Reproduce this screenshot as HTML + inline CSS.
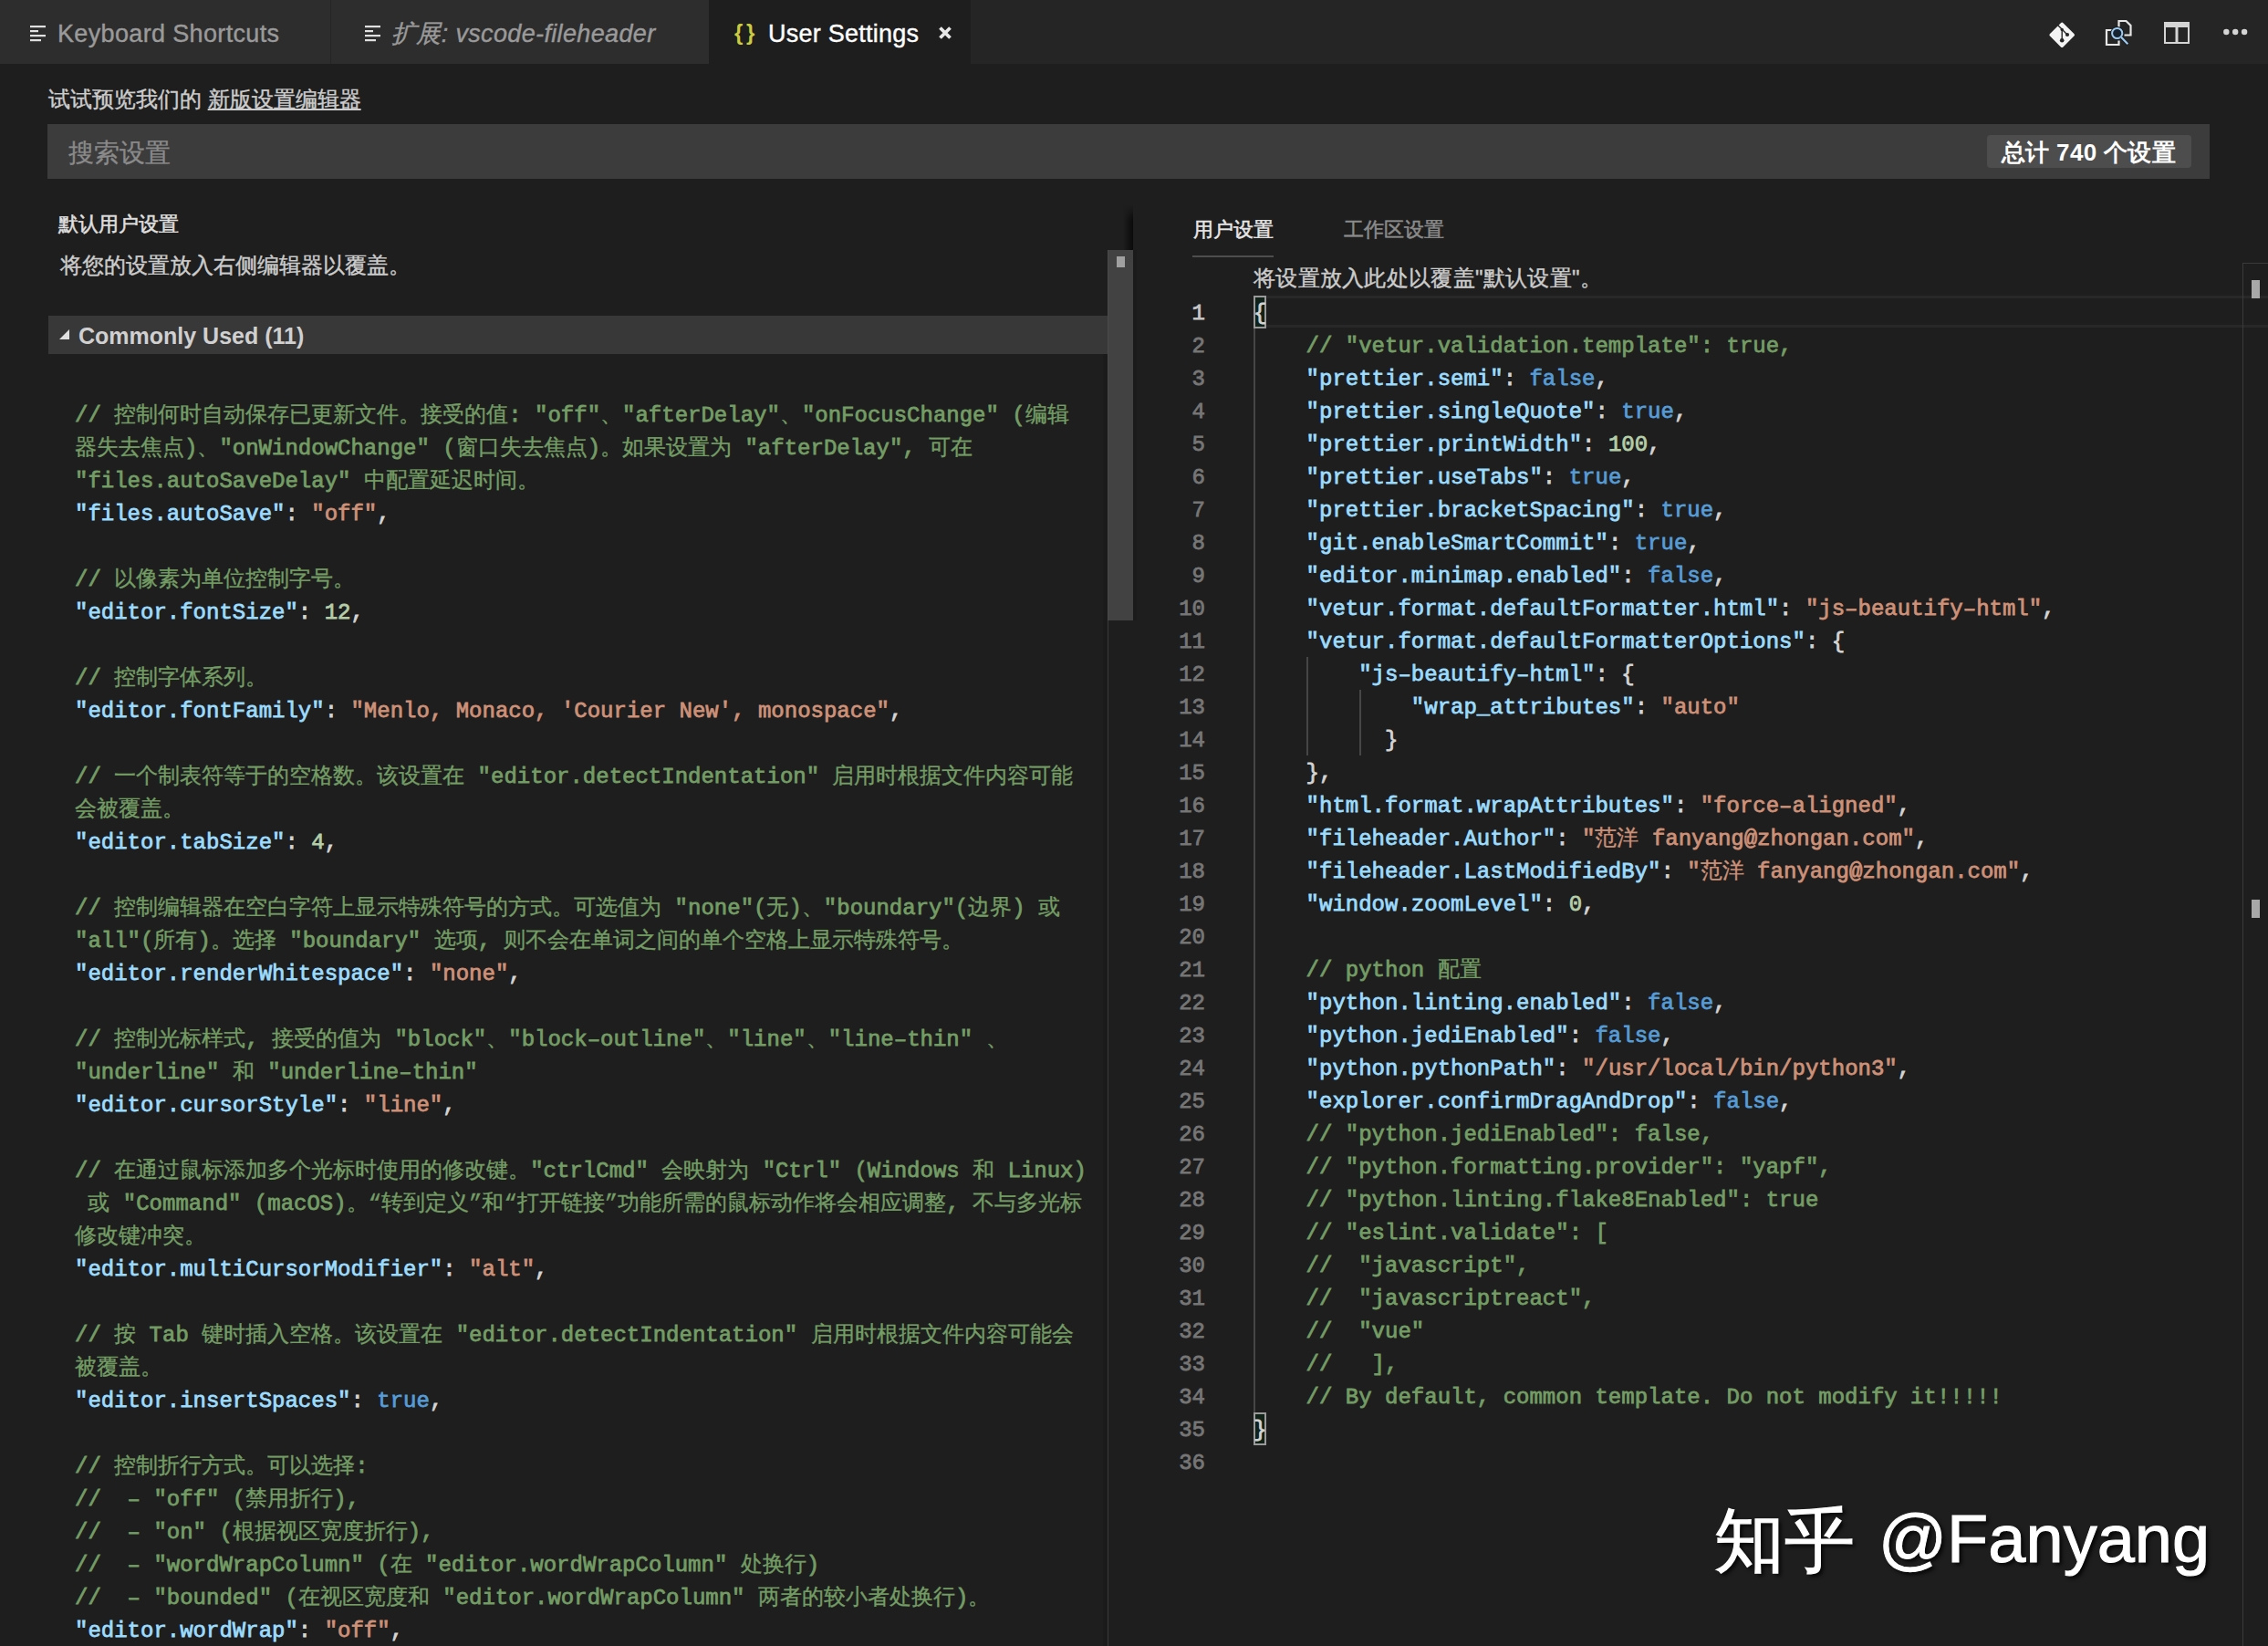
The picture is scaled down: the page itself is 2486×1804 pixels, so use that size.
<!DOCTYPE html><html><head><meta charset="utf-8"><style>
*{margin:0;padding:0;box-sizing:border-box}
html,body{width:2486px;height:1804px;overflow:hidden;background:#1e1e1e}
body{position:relative;font-family:"Liberation Sans",sans-serif;color:#ccc}
.a{position:absolute;white-space:pre}
.m{font-family:"Liberation Mono",monospace;font-size:24px;line-height:36px;height:36px;padding-top:3px;-webkit-text-stroke:0.8px currentColor}
.c{color:#739d64}.k{color:#9cdcfe}.s{color:#ce9178}.b{color:#569cd6}.n{color:#b5cea8}.p{color:#d4d4d4}
.ln{color:#767676;text-align:right;width:60px}
.z{font-style:normal;-webkit-text-stroke-width:0.35px}
</style></head><body>
<div class="a" style="left:0;top:0;width:2486px;height:70px;background:#252526"></div>
<div class="a" style="left:0;top:0;width:362px;height:70px;background:#2d2d2d"></div>
<div class="a" style="left:363px;top:0;width:414px;height:70px;background:#2d2d2d"></div>
<div class="a" style="left:777px;top:0;width:287px;height:70px;background:#1e1e1e"></div>
<svg class="a" style="left:33px;top:28px" width="18" height="18" viewBox="0 0 18 18"><rect x="0" y="0" width="17" height="2.2" fill="#e0e0e0"/><rect x="0" y="5" width="9" height="2.2" fill="#e0e0e0"/><rect x="0" y="10" width="17" height="2.2" fill="#e0e0e0"/><rect x="0" y="15" width="12" height="2.2" fill="#e0e0e0"/></svg>
<div class="a" style="left:63px;top:20px;font-size:27px;line-height:34px;color:#9a9a9a;letter-spacing:0.35px;-webkit-text-stroke:0.4px currentColor">Keyboard Shortcuts</div>
<svg class="a" style="left:400px;top:28px" width="18" height="18" viewBox="0 0 18 18"><rect x="0" y="0" width="17" height="2.2" fill="#e0e0e0"/><rect x="0" y="5" width="9" height="2.2" fill="#e0e0e0"/><rect x="0" y="10" width="17" height="2.2" fill="#e0e0e0"/><rect x="0" y="15" width="12" height="2.2" fill="#e0e0e0"/></svg>
<div class="a" style="left:429px;top:20px;font-size:27px;line-height:34px;color:#9a9a9a;font-style:italic;letter-spacing:0.35px;-webkit-text-stroke:0.4px currentColor">扩展: vscode-fileheader</div>
<div class="a" style="left:805px;top:19px;font-size:24px;line-height:34px;color:#cbcb41;font-weight:bold">{</div><div class="a" style="left:818px;top:19px;font-size:24px;line-height:34px;color:#cbcb41;font-weight:bold">}</div>
<div class="a" style="left:842px;top:20px;font-size:27px;line-height:34px;color:#ffffff;letter-spacing:0.25px;-webkit-text-stroke:0.4px currentColor">User Settings</div>
<svg class="a" style="left:1028px;top:28px" width="16" height="16" viewBox="0 0 16 16"><path d="M2.5 2.5L13.5 13.5M13.5 2.5L2.5 13.5" stroke="#e8e8e8" stroke-width="3.8"/></svg>
<svg class="a" style="left:2246px;top:24px" width="29" height="29" viewBox="0 0 29 29"><path d="M14.2 2.4L26.1 14.3L14.2 26.2L2.3 14.3Z" fill="#f4f4f4" stroke="#f4f4f4" stroke-linejoin="round" stroke-width="3.6"/><path d="M9.3 3.3L20 14M14.2 8.2V20" stroke="#252526" stroke-width="1.4" fill="none"/><circle cx="14.2" cy="8.4" r="1.7" fill="#252526"/><circle cx="20" cy="14" r="2.1" fill="#252526"/><circle cx="14.2" cy="20.2" r="2.3" fill="#252526"/></svg>
<svg class="a" style="left:2307px;top:21px" width="31" height="31" viewBox="0 0 31 31"><path d="M15.5 11V2H23.5L28.5 7V17.5H21.5" fill="none" stroke="#e6e6e6" stroke-width="2.2"/><path d="M8 12H2V28H15.5V23.5" fill="none" stroke="#e6e6e6" stroke-width="2.2"/><circle cx="13.7" cy="15.5" r="6.6" fill="#172230" stroke="#1a1a1a" stroke-width="2"/><circle cx="13.7" cy="15.5" r="5.6" fill="none" stroke="#9ccbf2" stroke-width="2"/><path d="M17.8 19.6L25.3 27.3" stroke="#1a1a1a" stroke-width="4"/><path d="M17.8 19.6L25.3 27.3" stroke="#9ccbf2" stroke-width="2.2"/></svg>
<svg class="a" style="left:2372px;top:24px" width="28" height="24" viewBox="0 0 28 24"><path d="M0 0H28V24H0Z M2 6V22H12.5V6Z M15.5 6V22H26V6Z" fill="#d4d4d4" fill-rule="evenodd"/></svg>
<svg class="a" style="left:2437px;top:29px" width="28" height="12" viewBox="0 0 28 12"><circle cx="3.3" cy="6" r="3.2" fill="#d4d4d4"/><circle cx="13.2" cy="6" r="3.2" fill="#d4d4d4"/><circle cx="23.1" cy="6" r="3.2" fill="#d4d4d4"/></svg>
<div class="a" style="left:53px;top:93px;font-size:24px;line-height:32px;color:#cccccc;-webkit-text-stroke:0.4px currentColor">试试预览我们的 <span style="text-decoration:underline">新版设置编辑器</span></div>
<div class="a" style="left:52px;top:136px;width:2370px;height:60px;background:#3c3c3c"></div>
<div class="a" style="left:75px;top:150px;font-size:28px;line-height:36px;color:#8a8a8a;-webkit-text-stroke:0.3px currentColor">搜索设置</div>
<div class="a" style="left:2178px;top:148px;width:224px;height:36px;background:#4d4d4d;border-radius:4px"></div>
<div class="a" style="left:2194px;top:150px;font-size:26px;line-height:35px;color:#ffffff;font-weight:bold;letter-spacing:0.3px">总计 740 个设置</div>
<div class="a" style="left:64px;top:230px;font-size:22px;line-height:32px;color:#e0e0e0;font-weight:500;-webkit-text-stroke:0.5px currentColor">默认用户设置</div>
<div class="a" style="left:66px;top:275px;font-size:24px;line-height:32px;color:#cccccc;-webkit-text-stroke:0.4px currentColor">将您的设置放入右侧编辑器以覆盖。</div>
<div class="a" style="left:53px;top:346px;width:1161px;height:42px;background:#383838"></div>
<svg class="a" style="left:65px;top:361px" width="11" height="11" viewBox="0 0 11 11"><path d="M11 0V11H0Z" fill="#e0e0e0"/></svg>
<div class="a" style="left:86px;top:351px;font-size:25px;line-height:34px;color:#d0d0d0;font-weight:bold">Commonly Used (11)</div>
<div class="a m" style="left:82px;top:435px"><span class="c">// <i class="z">控制何时自动保存已更新文件。接受的值</i>: &quot;off&quot;<i class="z">、</i>&quot;afterDelay&quot;<i class="z">、</i>&quot;onFocusChange&quot; (<i class="z">编辑</i></span></div>
<div class="a m" style="left:82px;top:471px"><span class="c"><i class="z">器失去焦点</i>)<i class="z">、</i>&quot;onWindowChange&quot; (<i class="z">窗口失去焦点</i>)<i class="z">。如果设置为</i> &quot;afterDelay&quot;, <i class="z">可在</i></span></div>
<div class="a m" style="left:82px;top:507px"><span class="c">&quot;files.autoSaveDelay&quot; <i class="z">中配置延迟时间。</i></span></div>
<div class="a m" style="left:82px;top:543px"><span class="k">&quot;files.autoSave&quot;</span><span class="p">: </span><span class="s">&quot;off&quot;</span><span class="p">,</span></div>
<div class="a m" style="left:82px;top:615px"><span class="c">// <i class="z">以像素为单位控制字号。</i></span></div>
<div class="a m" style="left:82px;top:651px"><span class="k">&quot;editor.fontSize&quot;</span><span class="p">: </span><span class="n">12</span><span class="p">,</span></div>
<div class="a m" style="left:82px;top:723px"><span class="c">// <i class="z">控制字体系列。</i></span></div>
<div class="a m" style="left:82px;top:759px"><span class="k">&quot;editor.fontFamily&quot;</span><span class="p">: </span><span class="s">&quot;Menlo, Monaco, &#x27;Courier New&#x27;, monospace&quot;</span><span class="p">,</span></div>
<div class="a m" style="left:82px;top:831px"><span class="c">// <i class="z">一个制表符等于的空格数。该设置在</i> &quot;editor.detectIndentation&quot; <i class="z">启用时根据文件内容可能</i></span></div>
<div class="a m" style="left:82px;top:867px"><span class="c"><i class="z">会被覆盖。</i></span></div>
<div class="a m" style="left:82px;top:903px"><span class="k">&quot;editor.tabSize&quot;</span><span class="p">: </span><span class="n">4</span><span class="p">,</span></div>
<div class="a m" style="left:82px;top:975px"><span class="c">// <i class="z">控制编辑器在空白字符上显示特殊符号的方式。可选值为</i> &quot;none&quot;(<i class="z">无</i>)<i class="z">、</i>&quot;boundary&quot;(<i class="z">边界</i>) <i class="z">或</i></span></div>
<div class="a m" style="left:82px;top:1011px"><span class="c">&quot;all&quot;(<i class="z">所有</i>)<i class="z">。选择</i> &quot;boundary&quot; <i class="z">选项</i>, <i class="z">则不会在单词之间的单个空格上显示特殊符号。</i></span></div>
<div class="a m" style="left:82px;top:1047px"><span class="k">&quot;editor.renderWhitespace&quot;</span><span class="p">: </span><span class="s">&quot;none&quot;</span><span class="p">,</span></div>
<div class="a m" style="left:82px;top:1119px"><span class="c">// <i class="z">控制光标样式</i>, <i class="z">接受的值为</i> &quot;block&quot;<i class="z">、</i>&quot;block–outline&quot;<i class="z">、</i>&quot;line&quot;<i class="z">、</i>&quot;line–thin&quot; <i class="z">、</i></span></div>
<div class="a m" style="left:82px;top:1155px"><span class="c">&quot;underline&quot; <i class="z">和</i> &quot;underline–thin&quot;</span></div>
<div class="a m" style="left:82px;top:1191px"><span class="k">&quot;editor.cursorStyle&quot;</span><span class="p">: </span><span class="s">&quot;line&quot;</span><span class="p">,</span></div>
<div class="a m" style="left:82px;top:1263px"><span class="c">// <i class="z">在通过鼠标添加多个光标时使用的修改键。</i>&quot;ctrlCmd&quot; <i class="z">会映射为</i> &quot;Ctrl&quot; (Windows <i class="z">和</i> Linux)</span></div>
<div class="a m" style="left:82px;top:1299px"><span class="c"> <i class="z">或</i> &quot;Command&quot; (macOS)<i class="z">。“转到定义”和“打开链接”功能所需的鼠标动作将会相应调整</i>, <i class="z">不与多光标</i></span></div>
<div class="a m" style="left:82px;top:1335px"><span class="c"><i class="z">修改键冲突。</i></span></div>
<div class="a m" style="left:82px;top:1371px"><span class="k">&quot;editor.multiCursorModifier&quot;</span><span class="p">: </span><span class="s">&quot;alt&quot;</span><span class="p">,</span></div>
<div class="a m" style="left:82px;top:1443px"><span class="c">// <i class="z">按</i> Tab <i class="z">键时插入空格。该设置在</i> &quot;editor.detectIndentation&quot; <i class="z">启用时根据文件内容可能会</i></span></div>
<div class="a m" style="left:82px;top:1479px"><span class="c"><i class="z">被覆盖。</i></span></div>
<div class="a m" style="left:82px;top:1515px"><span class="k">&quot;editor.insertSpaces&quot;</span><span class="p">: </span><span class="b">true</span><span class="p">,</span></div>
<div class="a m" style="left:82px;top:1587px"><span class="c">// <i class="z">控制折行方式。可以选择</i>:</span></div>
<div class="a m" style="left:82px;top:1623px"><span class="c">//  – &quot;off&quot; (<i class="z">禁用折行</i>),</span></div>
<div class="a m" style="left:82px;top:1659px"><span class="c">//  – &quot;on&quot; (<i class="z">根据视区宽度折行</i>),</span></div>
<div class="a m" style="left:82px;top:1695px"><span class="c">//  – &quot;wordWrapColumn&quot; (<i class="z">在</i> &quot;editor.wordWrapColumn&quot; <i class="z">处换行</i>)</span></div>
<div class="a m" style="left:82px;top:1731px"><span class="c">//  – &quot;bounded&quot; (<i class="z">在视区宽度和</i> &quot;editor.wordWrapColumn&quot; <i class="z">两者的较小者处换行</i>)<i class="z">。</i></span></div>
<div class="a m" style="left:82px;top:1767px"><span class="k">&quot;editor.wordWrap&quot;</span><span class="p">: </span><span class="s">&quot;off&quot;</span><span class="p">,</span></div>
<div class="a" style="left:1209px;top:388px;width:5px;height:1416px;background:#1b1b1b"></div>
<div class="a" style="left:1242px;top:274px;width:4px;height:406px;background:#1b1b1b"></div>
<div class="a" style="left:1214px;top:274px;width:1px;height:1530px;background:#3a3a3a"></div>
<div class="a" style="left:1214px;top:274px;width:28px;height:406px;background:#424242;border-left:1px solid #4a4a4a"></div>
<div class="a" style="left:1224px;top:281px;width:9px;height:12px;background:#a0a0a0"></div>
<div class="a" style="left:1231px;top:225px;width:11px;height:49px;background:linear-gradient(to right,rgba(0,0,0,0),rgba(0,0,0,0.65));-webkit-mask-image:linear-gradient(to bottom,transparent,#000 35%)"></div>
<div class="a" style="left:1308px;top:236px;font-size:22px;line-height:32px;color:#e7e7e7;font-weight:500;-webkit-text-stroke:0.5px currentColor">用户设置</div>
<div class="a" style="left:1473px;top:236px;font-size:22px;line-height:32px;color:#8b8b8b;font-weight:500;-webkit-text-stroke:0.5px currentColor">工作区设置</div>
<div class="a" style="left:1307px;top:280px;width:89px;height:2px;background:#4d4d4d"></div>
<div class="a" style="left:1374px;top:289px;font-size:24px;line-height:32px;color:#cccccc;letter-spacing:0.3px;-webkit-text-stroke:0.4px currentColor">将设置放入此处以覆盖"默认设置"。</div>
<div class="a" style="left:1374px;top:324px;width:1112px;height:35px;border-top:3px solid #282828;border-bottom:3px solid #282828"></div>
<div class="a" style="left:1374px;top:360px;width:2px;height:1188px;background:#464646"></div>
<div class="a" style="left:1432px;top:720px;width:2px;height:108px;background:#464646"></div>
<div class="a" style="left:1490px;top:756px;width:2px;height:72px;background:#464646"></div>
<div class="a" style="left:1374px;top:324px;width:14px;height:36px;border:2px solid #9a9a9a;background:#112219"></div>
<div class="a" style="left:1374px;top:1548px;width:14px;height:36px;border:2px solid #9a9a9a;background:#112219"></div>
<div class="a m ln" style="left:1261px;top:323px;color:#c6c6c6">1</div>
<div class="a m" style="left:1374px;top:323px"><span class="p">{</span></div>
<div class="a m ln" style="left:1261px;top:359px;">2</div>
<div class="a m" style="left:1374px;top:359px"><span class="c">    // &quot;vetur.validation.template&quot;: true,</span></div>
<div class="a m ln" style="left:1261px;top:395px;">3</div>
<div class="a m" style="left:1374px;top:395px"><span class="p">    </span><span class="k">&quot;prettier.semi&quot;</span><span class="p">: </span><span class="b">false</span><span class="p">,</span></div>
<div class="a m ln" style="left:1261px;top:431px;">4</div>
<div class="a m" style="left:1374px;top:431px"><span class="p">    </span><span class="k">&quot;prettier.singleQuote&quot;</span><span class="p">: </span><span class="b">true</span><span class="p">,</span></div>
<div class="a m ln" style="left:1261px;top:467px;">5</div>
<div class="a m" style="left:1374px;top:467px"><span class="p">    </span><span class="k">&quot;prettier.printWidth&quot;</span><span class="p">: </span><span class="n">100</span><span class="p">,</span></div>
<div class="a m ln" style="left:1261px;top:503px;">6</div>
<div class="a m" style="left:1374px;top:503px"><span class="p">    </span><span class="k">&quot;prettier.useTabs&quot;</span><span class="p">: </span><span class="b">true</span><span class="p">,</span></div>
<div class="a m ln" style="left:1261px;top:539px;">7</div>
<div class="a m" style="left:1374px;top:539px"><span class="p">    </span><span class="k">&quot;prettier.bracketSpacing&quot;</span><span class="p">: </span><span class="b">true</span><span class="p">,</span></div>
<div class="a m ln" style="left:1261px;top:575px;">8</div>
<div class="a m" style="left:1374px;top:575px"><span class="p">    </span><span class="k">&quot;git.enableSmartCommit&quot;</span><span class="p">: </span><span class="b">true</span><span class="p">,</span></div>
<div class="a m ln" style="left:1261px;top:611px;">9</div>
<div class="a m" style="left:1374px;top:611px"><span class="p">    </span><span class="k">&quot;editor.minimap.enabled&quot;</span><span class="p">: </span><span class="b">false</span><span class="p">,</span></div>
<div class="a m ln" style="left:1261px;top:647px;">10</div>
<div class="a m" style="left:1374px;top:647px"><span class="p">    </span><span class="k">&quot;vetur.format.defaultFormatter.html&quot;</span><span class="p">: </span><span class="s">&quot;js–beautify–html&quot;</span><span class="p">,</span></div>
<div class="a m ln" style="left:1261px;top:683px;">11</div>
<div class="a m" style="left:1374px;top:683px"><span class="p">    </span><span class="k">&quot;vetur.format.defaultFormatterOptions&quot;</span><span class="p">: {</span></div>
<div class="a m ln" style="left:1261px;top:719px;">12</div>
<div class="a m" style="left:1374px;top:719px"><span class="p">        </span><span class="k">&quot;js–beautify–html&quot;</span><span class="p">: {</span></div>
<div class="a m ln" style="left:1261px;top:755px;">13</div>
<div class="a m" style="left:1374px;top:755px"><span class="p">            </span><span class="k">&quot;wrap_attributes&quot;</span><span class="p">: </span><span class="s">&quot;auto&quot;</span></div>
<div class="a m ln" style="left:1261px;top:791px;">14</div>
<div class="a m" style="left:1374px;top:791px"><span class="p">          }</span></div>
<div class="a m ln" style="left:1261px;top:827px;">15</div>
<div class="a m" style="left:1374px;top:827px"><span class="p">    },</span></div>
<div class="a m ln" style="left:1261px;top:863px;">16</div>
<div class="a m" style="left:1374px;top:863px"><span class="p">    </span><span class="k">&quot;html.format.wrapAttributes&quot;</span><span class="p">: </span><span class="s">&quot;force–aligned&quot;</span><span class="p">,</span></div>
<div class="a m ln" style="left:1261px;top:899px;">17</div>
<div class="a m" style="left:1374px;top:899px"><span class="p">    </span><span class="k">&quot;fileheader.Author&quot;</span><span class="p">: </span><span class="s">&quot;<i class="z">范洋</i> fanyang@zhongan.com&quot;</span><span class="p">,</span></div>
<div class="a m ln" style="left:1261px;top:935px;">18</div>
<div class="a m" style="left:1374px;top:935px"><span class="p">    </span><span class="k">&quot;fileheader.LastModifiedBy&quot;</span><span class="p">: </span><span class="s">&quot;<i class="z">范洋</i> fanyang@zhongan.com&quot;</span><span class="p">,</span></div>
<div class="a m ln" style="left:1261px;top:971px;">19</div>
<div class="a m" style="left:1374px;top:971px"><span class="p">    </span><span class="k">&quot;window.zoomLevel&quot;</span><span class="p">: </span><span class="n">0</span><span class="p">,</span></div>
<div class="a m ln" style="left:1261px;top:1007px;">20</div>
<div class="a m ln" style="left:1261px;top:1043px;">21</div>
<div class="a m" style="left:1374px;top:1043px"><span class="c">    // python <i class="z">配置</i></span></div>
<div class="a m ln" style="left:1261px;top:1079px;">22</div>
<div class="a m" style="left:1374px;top:1079px"><span class="p">    </span><span class="k">&quot;python.linting.enabled&quot;</span><span class="p">: </span><span class="b">false</span><span class="p">,</span></div>
<div class="a m ln" style="left:1261px;top:1115px;">23</div>
<div class="a m" style="left:1374px;top:1115px"><span class="p">    </span><span class="k">&quot;python.jediEnabled&quot;</span><span class="p">: </span><span class="b">false</span><span class="p">,</span></div>
<div class="a m ln" style="left:1261px;top:1151px;">24</div>
<div class="a m" style="left:1374px;top:1151px"><span class="p">    </span><span class="k">&quot;python.pythonPath&quot;</span><span class="p">: </span><span class="s">&quot;/usr/local/bin/python3&quot;</span><span class="p">,</span></div>
<div class="a m ln" style="left:1261px;top:1187px;">25</div>
<div class="a m" style="left:1374px;top:1187px"><span class="p">    </span><span class="k">&quot;explorer.confirmDragAndDrop&quot;</span><span class="p">: </span><span class="b">false</span><span class="p">,</span></div>
<div class="a m ln" style="left:1261px;top:1223px;">26</div>
<div class="a m" style="left:1374px;top:1223px"><span class="c">    // &quot;python.jediEnabled&quot;: false,</span></div>
<div class="a m ln" style="left:1261px;top:1259px;">27</div>
<div class="a m" style="left:1374px;top:1259px"><span class="c">    // &quot;python.formatting.provider&quot;: &quot;yapf&quot;,</span></div>
<div class="a m ln" style="left:1261px;top:1295px;">28</div>
<div class="a m" style="left:1374px;top:1295px"><span class="c">    // &quot;python.linting.flake8Enabled&quot;: true</span></div>
<div class="a m ln" style="left:1261px;top:1331px;">29</div>
<div class="a m" style="left:1374px;top:1331px"><span class="c">    // &quot;eslint.validate&quot;: [</span></div>
<div class="a m ln" style="left:1261px;top:1367px;">30</div>
<div class="a m" style="left:1374px;top:1367px"><span class="c">    //  &quot;javascript&quot;,</span></div>
<div class="a m ln" style="left:1261px;top:1403px;">31</div>
<div class="a m" style="left:1374px;top:1403px"><span class="c">    //  &quot;javascriptreact&quot;,</span></div>
<div class="a m ln" style="left:1261px;top:1439px;">32</div>
<div class="a m" style="left:1374px;top:1439px"><span class="c">    //  &quot;vue&quot;</span></div>
<div class="a m ln" style="left:1261px;top:1475px;">33</div>
<div class="a m" style="left:1374px;top:1475px"><span class="c">    //   ],</span></div>
<div class="a m ln" style="left:1261px;top:1511px;">34</div>
<div class="a m" style="left:1374px;top:1511px"><span class="c">    // By default, common template. Do not modify it!!!!!</span></div>
<div class="a m ln" style="left:1261px;top:1547px;">35</div>
<div class="a m" style="left:1374px;top:1547px"><span class="p">}</span></div>
<div class="a m ln" style="left:1261px;top:1583px;">36</div>
<div class="a" style="left:2458px;top:288px;width:1px;height:1516px;background:#3a3a3a"></div>
<div class="a" style="left:2458px;top:288px;width:28px;height:1px;background:#3a3a3a"></div>
<div class="a" style="left:2468px;top:307px;width:9px;height:20px;background:#a8a8a8"></div>
<div class="a" style="left:2468px;top:986px;width:9px;height:20px;background:#a8a8a8"></div>
<div class="a" style="left:1879px;top:1638px;font-size:77px;line-height:100px;color:#ffffff;-webkit-text-stroke:1.2px #fff;text-shadow:3px 3px 4px rgba(0,0,0,0.85)">知乎</div>
<div class="a" style="left:2059px;top:1637px;font-size:74px;line-height:100px;color:#ffffff;-webkit-text-stroke:1px #fff;text-shadow:3px 3px 4px rgba(0,0,0,0.85)">@Fanyang</div>
</body></html>
